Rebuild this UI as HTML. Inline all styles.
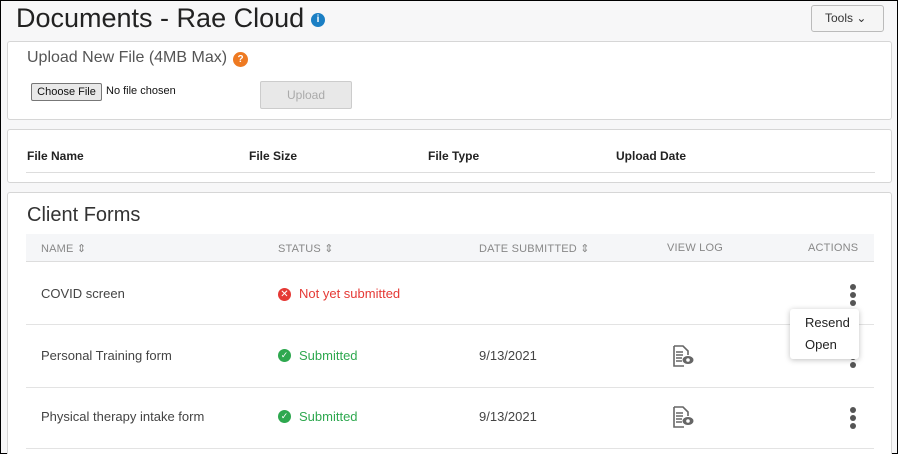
<!DOCTYPE html>
<html><head><style>
*{box-sizing:border-box;margin:0;padding:0}
html{overflow:hidden;width:898px;height:454px}
body{width:898px;height:454px;overflow:hidden;background:#f7f7f8;font-family:"Liberation Sans",sans-serif;position:relative;border:1px solid #000}
.a{position:absolute}
.panel{position:absolute;left:6px;width:885px;background:#fff;border:1px solid #d6d6d6;border-radius:3px}
.h{font-size:12px;font-weight:bold;color:#222;top:148px}
.th{font-size:11px;color:#888;top:241px;letter-spacing:.2px}
.td{font-size:13px;color:#444}
.dots{position:absolute;width:6px}
.dots i{display:block;width:6px;height:6px;border-radius:3px;background:#555;margin-bottom:2px}
</style></head><body>
<div class="a" style="left:15px;top:2px;font-size:27px;color:#222">Documents - Rae Cloud</div>
<div class="a" style="left:310px;top:12px;width:14px;height:14px;border-radius:7px;background:#1b7fc4;color:#fff;font-size:10px;font-weight:bold;text-align:center;line-height:14px">i</div>
<div class="a" style="left:810px;top:4px;width:73px;height:27px;border:1px solid #bbb;border-radius:3px;background:#f5f5f5;font-size:12px;color:#333;line-height:25px;padding-left:13px">Tools &#8964;</div>
<div class="panel" style="top:40px;height:79px"></div>
<div class="a" style="left:26px;top:48px;font-size:16px;color:#555">Upload New File (4MB Max)</div>
<div class="a" style="left:232px;top:51px;width:15px;height:15px;border-radius:8px;background:#ee7a22;color:#fff;font-size:10px;font-weight:bold;text-align:center;line-height:15px">?</div>
<div class="a" style="left:30px;top:82px;width:71px;height:18px;border:1px solid #777;border-radius:2px;background:#e9e9e9;font-size:11px;color:#111;text-align:center;line-height:16px">Choose File</div>
<div class="a" style="left:105px;top:84px;font-size:11px;color:#111">No file chosen</div>
<div class="a" style="left:259px;top:80px;width:92px;height:28px;border:1px solid #ccc;border-radius:2px;background:#e8e8e8;font-size:12px;color:#aaa;text-align:center;line-height:26px">Upload</div>
<div class="panel" style="top:128px;height:54px"></div>
<div class="a h" style="left:26px">File Name</div>
<div class="a h" style="left:248px">File Size</div>
<div class="a h" style="left:427px">File Type</div>
<div class="a h" style="left:615px">Upload Date</div>
<div class="a" style="left:25px;top:171px;width:849px;height:1px;background:#ddd"></div>
<div class="panel" style="top:191px;height:270px"></div>
<div class="a" style="left:26px;top:203px;font-size:20px;color:#333">Client Forms</div>
<div class="a" style="left:25px;top:233px;width:848px;height:28px;background:#f5f6f8;border-bottom:1px solid #ddd"></div>
<div class="a th" style="left:40px">NAME &#8661;</div>
<div class="a th" style="left:277px">STATUS &#8661;</div>
<div class="a th" style="left:478px">DATE SUBMITTED &#8661;</div>
<div class="a th" style="left:666px">VIEW LOG</div>
<div class="a th" style="left:807px">ACTIONS</div>
<div class="a" style="left:25px;top:323px;width:848px;height:1px;background:#e3e3e3"></div>
<div class="a" style="left:25px;top:386px;width:848px;height:1px;background:#e3e3e3"></div>
<div class="a" style="left:25px;top:447px;width:848px;height:1px;background:#e3e3e3"></div>
<div class="a td" style="left:40px;top:285px">COVID screen</div>
<div class="a td" style="left:40px;top:347px">Personal Training form</div>
<div class="a td" style="left:40px;top:408px">Physical therapy intake form</div>
<div class="a" style="left:277px;top:287px;width:13px;height:13px;border-radius:7px;background:#e53935;color:#fff;font-size:10px;text-align:center;line-height:13px">✕</div>
<div class="a td" style="left:298px;top:285px;color:#e53935">Not yet submitted</div>
<div class="a" style="left:277px;top:348px;width:13px;height:13px;border-radius:7px;background:#2ea84f;color:#fff;font-size:9px;text-align:center;line-height:13px">✓</div>
<div class="a td" style="left:298px;top:347px;color:#2ea84f">Submitted</div>
<div class="a" style="left:277px;top:409px;width:13px;height:13px;border-radius:7px;background:#2ea84f;color:#fff;font-size:9px;text-align:center;line-height:13px">✓</div>
<div class="a td" style="left:298px;top:408px;color:#2ea84f">Submitted</div>
<div class="a td" style="left:478px;top:347px">9/13/2021</div>
<div class="a td" style="left:478px;top:408px">9/13/2021</div>
<svg class="a" style="left:671px;top:344px" width="22" height="22" viewBox="0 0 22 22"><path d="M2 1h9l5 5v4M2 1v20h10" fill="none" stroke="#666" stroke-width="1.6"/><path d="M4 7h7M4 10h7M4 13h6M4 16h6" stroke="#666" stroke-width="1.4"/><ellipse cx="16" cy="15" rx="5.5" ry="4" fill="#666"/><circle cx="16" cy="15" r="1.8" fill="#fff"/></svg>
<svg class="a" style="left:671px;top:405px" width="22" height="22" viewBox="0 0 22 22"><path d="M2 1h9l5 5v4M2 1v20h10" fill="none" stroke="#666" stroke-width="1.6"/><path d="M4 7h7M4 10h7M4 13h6M4 16h6" stroke="#666" stroke-width="1.4"/><ellipse cx="16" cy="15" rx="5.5" ry="4" fill="#666"/><circle cx="16" cy="15" r="1.8" fill="#fff"/></svg>
<div class="dots" style="left:849px;top:283px"><i></i><i></i><i></i></div>
<div class="dots" style="left:849px;top:345px"><i></i><i></i><i></i></div>
<div class="dots" style="left:849px;top:406px"><i></i><i></i><i></i></div>
<div class="a" style="left:789px;top:308px;width:69px;height:50px;background:#fff;border-radius:3px;box-shadow:0 1px 6px rgba(0,0,0,.25)"></div>
<div class="a" style="left:804px;top:314px;font-size:13px;color:#222">Resend</div>
<div class="a" style="left:804px;top:336px;font-size:13px;color:#222">Open</div>
</body></html>
